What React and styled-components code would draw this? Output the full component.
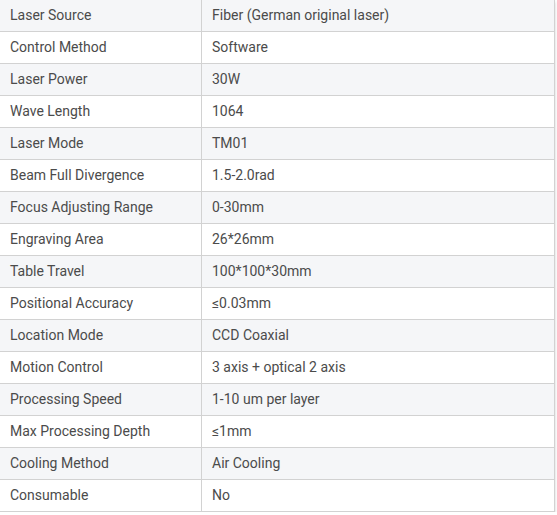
import React from "react";
import styled, { createGlobalStyle } from "styled-components";

const GlobalStyle = createGlobalStyle`
  body {
    margin: 0;
    background: #ffffff;
    font-family: Roboto, "Liberation Sans", sans-serif;
  }
`;

const Wrapper = styled.div`
  width: 555px;
  box-shadow: 0 2px 3px rgba(0, 0, 0, 0.18);
`;

const SpecTable = styled.table`
  width: 100%;
  border-collapse: separate;
  border-spacing: 0;
  table-layout: fixed;
  font-size: 14px;
  color: #4b4b4b;
`;

const Row = styled.tr`
  background: ${(p) => (p.$shaded ? "#f5f6f8" : "#ffffff")};
`;

const Cell = styled.td`
  box-sizing: border-box;
  height: 32px;
  padding: 0 10px 2px;
  vertical-align: middle;
  white-space: nowrap;
  border-bottom: 1px solid #d2d2d2;
  border-right: 1px solid #d2d2d2;
  width: ${(p) => (p.$label ? "202px" : "auto")};
  line-height: 28px;
`;

const specs = [
  ["Laser Source", "Fiber (German original laser)"],
  ["Control Method", "Software"],
  ["Laser Power", "30W"],
  ["Wave Length", "1064"],
  ["Laser Mode", "TM01"],
  ["Beam Full Divergence", "1.5-2.0rad"],
  ["Focus Adjusting Range", "0-30mm"],
  ["Engraving Area", "26*26mm"],
  ["Table Travel", "100*100*30mm"],
  ["Positional Accuracy", "≤0.03mm"],
  ["Location Mode", "CCD Coaxial"],
  ["Motion Control", "3 axis + optical 2 axis"],
  ["Processing Speed", "1-10 um per layer"],
  ["Max Processing Depth", "≤1mm"],
  ["Cooling Method", "Air Cooling"],
  ["Consumable", "No"],
];

const App = () => {
  return (
    <>
      <GlobalStyle />
      <Wrapper>
        <SpecTable>
          <tbody>
            {specs.map(([label, value], i) => (
              <Row key={label} $shaded={i % 2 === 0}>
                <Cell $label>{label}</Cell>
                <Cell>{value}</Cell>
              </Row>
            ))}
          </tbody>
        </SpecTable>
      </Wrapper>
    </>
  );
};

export default App;
